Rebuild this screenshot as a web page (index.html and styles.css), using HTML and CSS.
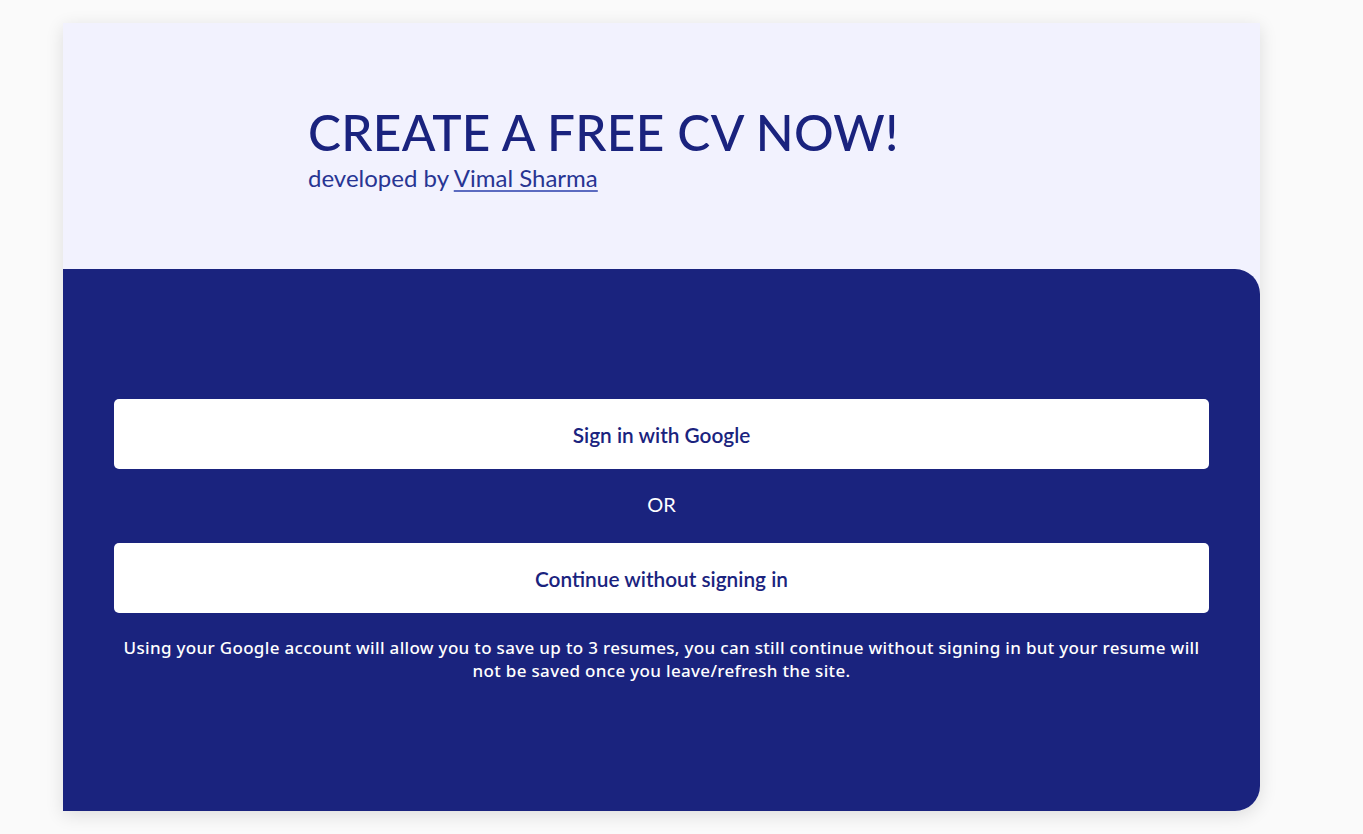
FILE: index.html
```html
<!DOCTYPE html>
<html lang="en">
<head>
<meta charset="utf-8">
<title>Create a free CV</title>
<link rel="stylesheet" href="styles.css">
</head>
<body>
<main class="card">
  <header class="hero">
    <h1 class="title">CREATE A FREE CV NOW!</h1>
    <p class="byline">developed by <a href="#" class="author">Vimal Sharma</a></p>
  </header>
  <section class="panel">
    <button class="btn">Sign in with Google</button>
    <div class="or">OR</div>
    <button class="btn">Continue without signing in</button>
    <p class="note">Using your Google account will allow you to save up to 3 resumes, you can still continue without signing in but your resume will not be saved once you leave/refresh the site.</p>
  </section>
</main>
</body>
</html>
```
FILE: styles.css
```css
html, body {
  margin: 0;
  padding: 0;
  background: #fafafa;
}
body {
  padding: 23px 103px 23px 63px;
  font-family: "Noto Sans", sans-serif;
}
.card {
  width: 1197px;
  height: 788px;
  background: #f2f2fe;
  box-shadow: 0 4px 18px rgba(0,0,0,0.12);
  border-radius: 0 0 25px 0;
  display: flex;
  flex-direction: column;
}
.hero {
  height: 246px;
  box-sizing: border-box;
  padding: 80px 0 0 245px;
}
.title {
  margin: 0;
  font-family: Lato, sans-serif;
  font-weight: 500;
  font-size: 49.5px;
  line-height: 58px;
  color: #1a237e;
  letter-spacing: 0.3px;
}
.byline {
  margin: 2px 0 0 0;
  font-family: Lato, sans-serif;
  font-size: 24px;
  color: #283593;
}
.author {
  color: #283593;
  text-decoration: underline;
  text-underline-offset: 3px;
  text-decoration-color: #5c6bc0;
}
.panel {
  flex: 1;
  background: #1a237e;
  border-radius: 0 25px 25px 0;
  padding: 130px 51px 0 51px;
  display: flex;
  flex-direction: column;
  align-items: stretch;
}
.btn {
  height: 70px;
  border: none;
  border-radius: 5px;
  background: #fff;
  color: #1a237e;
  font-family: Lato, sans-serif;
  font-weight: 600;
  font-size: 20.8px;
  cursor: pointer;
}
.or {
  height: 74px;
  box-sizing: border-box;
  padding-bottom: 4px;
  display: flex;
  align-items: center;
  justify-content: center;
  color: #fff;
  font-family: Lato, sans-serif;
  font-size: 20px;
}
.note {
  margin: 23px 0 0 0;
  color: #fff;
  text-align: center;
  font-size: 17px;
  letter-spacing: 0.32px;
  line-height: 23px;
  font-weight: 500;
}
```
